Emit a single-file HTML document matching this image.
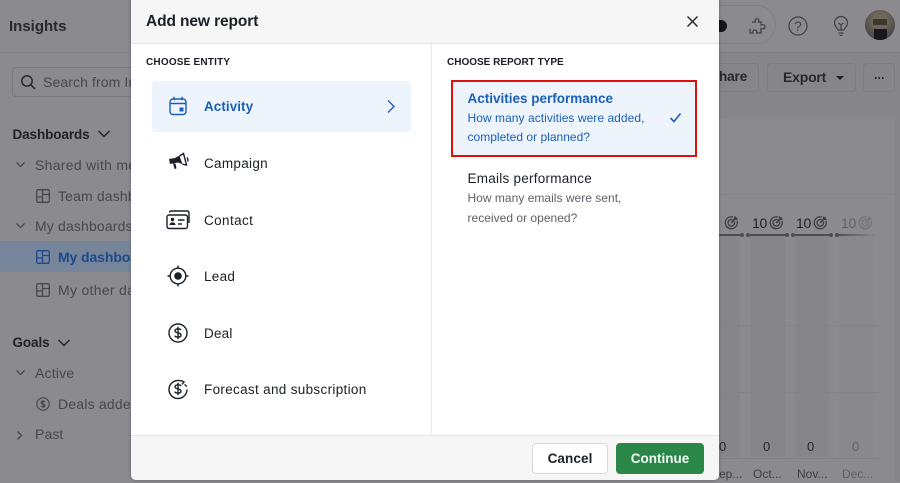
<!DOCTYPE html>
<html><head><meta charset="utf-8"><style>
*{box-sizing:border-box}
html,body{margin:0;padding:0}
body{width:900px;height:481px;overflow:hidden;position:relative;background:#8a8a8f;font-family:"Liberation Sans",sans-serif;color:#1b1f26}
.t{position:absolute;white-space:nowrap;line-height:18px;font-size:14px}
.b{color:#46484e}
.a{position:absolute;display:block;overflow:visible}
.dark{color:#1f2126;font-weight:700}
.cols div{position:absolute;background:#85858a}
.dot{position:absolute;top:233px;width:4px;height:4px;border-radius:50%;background:#4d4e53}
.ln{position:absolute;top:234px;height:2px;background:#4d4e53}
.gl{position:absolute;left:719px;width:160px;height:1px;background:#838388}
</style></head><body>
<!-- background page -->
<div style="position:absolute;left:700px;top:52px;width:200px;height:66px;background:#85858a"></div>
<div style="position:absolute;left:0;top:52px;width:900px;height:1px;background:#7f7f84"></div>
<div style="position:absolute;left:700px;top:194px;width:196px;height:1px;background:#838388"></div>
<div style="position:absolute;left:895px;top:118px;width:5px;height:363px;background:#85858a"></div>
<div class="t" style="left:9px;top:18px;font-size:15px;font-weight:700;color:#26282d">Insights</div>
<div style="position:absolute;left:12px;top:67px;width:140px;height:30px;border:1px solid #77777c;border-radius:4px"></div>
<svg class="a" style="left:19px;top:73px" width="18" height="18" viewBox="0 0 18 18" fill="none" stroke="#222429" stroke-width="1.400"><circle cx="8" cy="8" r="5.200"/><path d="M12 12l4 4"/></svg>
<div class="t b" style="left:43px;top:73px;letter-spacing:.1px">Search from In</div>
<div class="t dark" style="left:12.500px;top:126px;font-size:13.500px;letter-spacing:-.1px">Dashboards</div>
<svg class="a" style="left:97px;top:129px" width="14" height="10" fill="none" stroke="#222429" stroke-width="1.400"><path d="M1.500 2l5.500 5.500L12.500 2"/></svg>
<svg class="a" style="left:15px;top:161px" width="11" height="8" fill="none" stroke="#46484e" stroke-width="1.300"><path d="M1.500 1.500l4 4 4-4"/></svg>
<div class="t b" style="left:35px;top:156px;letter-spacing:.3px">Shared with me</div>
<svg class="a" style="left:36px;top:189px" width="14" height="14" fill="none" stroke="#46484e" stroke-width="1.300"><rect x=".7" y=".7" width="12.600" height="12.600" rx="1.500"/><path d="M6.500 .7v12.600M.7 8h5.800M6.500 5.500h6.800"/></svg>
<div class="t b" style="left:58px;top:187px;letter-spacing:.15px">Team dashb</div>
<svg class="a" style="left:15px;top:222px" width="11" height="8" fill="none" stroke="#46484e" stroke-width="1.300"><path d="M1.500 1.500l4 4 4-4"/></svg>
<div class="t b" style="left:35px;top:217px;letter-spacing:.15px">My dashboards</div>
<div style="position:absolute;left:0;top:241px;width:135px;height:31px;background:#77859b"></div>
<svg class="a" style="left:36px;top:250px" width="14" height="14" fill="none" stroke="#1c4a8c" stroke-width="1.300"><rect x=".7" y=".7" width="12.600" height="12.600" rx="1.500"/><path d="M6.500 .7v12.600M.7 8h5.800M6.500 5.500h6.800"/></svg>
<div class="t" style="left:58px;top:248px;font-weight:700;color:#1c4a8c;letter-spacing:-.1px">My dashboa</div>
<svg class="a" style="left:36px;top:283px" width="14" height="14" fill="none" stroke="#46484e" stroke-width="1.300"><rect x=".7" y=".7" width="12.600" height="12.600" rx="1.500"/><path d="M6.500 .7v12.600M.7 8h5.800M6.500 5.500h6.800"/></svg>
<div class="t b" style="left:58px;top:281px;letter-spacing:.3px">My other da</div>
<div class="t dark" style="left:12.500px;top:334px;font-size:13.500px;letter-spacing:-.1px">Goals</div>
<svg class="a" style="left:57px;top:338px" width="14" height="10" fill="none" stroke="#222429" stroke-width="1.400"><path d="M1.500 2l5.500 5.500L12.500 2"/></svg>
<svg class="a" style="left:15px;top:369px" width="11" height="8" fill="none" stroke="#46484e" stroke-width="1.300"><path d="M1.500 1.500l4 4 4-4"/></svg>
<div class="t b" style="left:35px;top:364px;letter-spacing:.2px">Active</div>
<svg class="a" style="left:36px;top:397px" width="14" height="14" fill="none" stroke="#46484e" stroke-width="1.200"><circle cx="7" cy="7" r="6.200"/><path d="M9 5c-.5-1-3.800-1.300-3.900.6C5 7.500 9 6.500 9 8.500c0 1.800-3.500 1.500-4 .4M7 3v8"/></svg>
<div class="t b" style="left:58px;top:395px;letter-spacing:.2px">Deals added</div>
<svg class="a" style="left:16px;top:430px" width="8" height="11" fill="none" stroke="#46484e" stroke-width="1.300"><path d="M1.500 1.500l4 4-4 4"/></svg>
<div class="t b" style="left:35px;top:425px;letter-spacing:.1px">Past</div>

<!-- right background -->
<div style="position:absolute;left:700px;top:5px;width:76px;height:39px;border:1px solid #7f7f84;border-radius:20px"></div>
<div style="position:absolute;left:719px;top:20px;width:8px;height:12px;border-radius:0 6px 6px 0;background:#141518"></div>
<svg class="a" style="left:749px;top:18px" width="18" height="16" viewBox="0 0 18 16" fill="none" stroke="#3e4046" stroke-width="1.200"><path d="M3 4h3.500c-1-2 .2-3.300 1.500-3.300S10.500 2 9.500 4H12v3c2-1 4-.2 4 1.700S14 11.500 12 10.500V15H7.500c.8-2-.5-3-1.700-3S3.300 13 4 15H1V10.500"/></svg>
<svg class="a" style="left:788px;top:16px" width="20" height="20" fill="none" stroke="#3e4046" stroke-width="1.200"><circle cx="10" cy="10" r="9"/></svg>
<div class="t" style="left:794px;top:17px;font-size:14px;color:#3e4046">?</div>
<svg class="a" style="left:833px;top:16px" width="16" height="20" fill="none" stroke="#3e4046" stroke-width="1.200"><path d="M5 14c0-2-3.500-3-3.500-7a6.500 6.500 0 0 1 13 0c0 4-3.500 5-3.500 7zM5.500 17h5M6.500 19.300h3M5.500 7l2.500 2 2.500-2M8 9v5"/></svg>
<div style="position:absolute;left:865px;top:10px;width:30px;height:30px;border-radius:50%;background:radial-gradient(circle at 50% 35%,#6d665a 0 30%,#54514d 60%,#3b3a3a);overflow:hidden"><div style="position:absolute;left:8px;top:9px;width:14px;height:6px;background:#3d362c"></div><div style="position:absolute;left:9px;top:19px;width:13px;height:12px;background:#17181c"></div></div>
<div style="position:absolute;left:700px;top:63px;width:59px;height:29px;border:1px solid #7c7c81;border-radius:4px"></div>
<div class="t" style="left:719px;top:68px;font-weight:700;font-size:13.500px;color:#26282d;letter-spacing:-.1px">hare</div>
<div style="position:absolute;left:767px;top:63px;width:89px;height:29px;border:1px solid #7c7c81;border-radius:4px"></div>
<div class="t" style="left:783px;top:68px;font-weight:700;color:#26282d;letter-spacing:-.2px">Export</div>
<div style="position:absolute;left:836px;top:76px;border:4px solid transparent;border-top:4px solid #1f2126;border-bottom:0"></div>
<div style="position:absolute;left:863px;top:63px;width:32px;height:29px;border:1px solid #7c7c81;border-radius:4px"></div>
<div style="position:absolute;left:874px;top:76.500px;width:10px;height:2px;background:radial-gradient(circle,#1f2126 1px,transparent 1px) 0 0/3.500px 2px"></div>

<div class="cols">
<div style="left:719px;top:236px;width:21px;height:221px"></div>
<div style="left:750px;top:236px;width:35px;height:221px"></div>
<div style="left:795px;top:236px;width:34px;height:221px"></div>
<div style="left:839px;top:236px;width:34px;height:221px;background:#88888d"></div>
</div>
<div class="gl" style="top:325px"></div>
<div class="gl" style="top:392px"></div>
<div class="gl" style="top:458px;background:#808085"></div>
<div class="ln" style="left:719px;width:23px"></div>
<div class="ln" style="left:748px;width:39px"></div>
<div class="ln" style="left:793px;width:38px"></div>
<div class="ln" style="left:837px;width:40px;background:linear-gradient(90deg,#4d4e53,#8a8a8f)"></div>
<div class="dot" style="left:740px"></div>
<div class="dot" style="left:746px"></div>
<div class="dot" style="left:785px"></div>
<div class="dot" style="left:791px"></div>
<div class="dot" style="left:829px"></div>
<div class="dot" style="left:835px"></div>
<div class="t" style="left:752px;top:214px;color:#1f2126;letter-spacing:-.3px">10</div>
<div class="t" style="left:796px;top:214px;color:#1f2126;letter-spacing:-.3px">10</div>
<div class="t" style="left:841px;top:214px;color:#606166;letter-spacing:-.3px">10</div>
<svg width="0" height="0" style="position:absolute"><defs><g id="tg" fill="none" stroke-width="1.300"><path d="M9 2A6 6 0 1 0 13 6"/><path d="M8.500 4.700a3.300 3.300 0 1 0 1.900 1.900"/><path d="M7.200 7.800L12.500 2.500M10.700 1.500v2.800h2.800" stroke-width="1.700"/></g></defs></svg>
<svg class="a" style="left:724px;top:215px;stroke:#3e4046" width="15" height="15"><use href="#tg"/></svg>
<svg class="a" style="left:769px;top:215px;stroke:#3e4046" width="15" height="15"><use href="#tg"/></svg>
<svg class="a" style="left:813px;top:215px;stroke:#3e4046" width="15" height="15"><use href="#tg"/></svg>
<svg class="a" style="left:858px;top:215px;stroke:#747579" width="15" height="15"><use href="#tg"/></svg>
<div class="t" style="left:719px;top:438px;color:#26282d;font-size:13px">0</div>
<div class="t" style="left:763px;top:438px;color:#26282d;font-size:13px">0</div>
<div class="t" style="left:807px;top:438px;color:#26282d;font-size:13px">0</div>
<div class="t" style="left:852px;top:438px;color:#606166;font-size:13px">0</div>
<div class="t" style="left:719px;top:465px;color:#3e4046;font-size:12px">ep...</div>
<div class="t" style="left:753px;top:465px;color:#3e4046;font-size:12px">Oct...</div>
<div class="t" style="left:797px;top:465px;color:#3e4046;font-size:12px">Nov...</div>
<div class="t" style="left:842px;top:465px;color:#606166;font-size:12px">Dec...</div>

<!-- modal -->
<div style="position:absolute;left:131px;top:-6px;width:588px;height:486px;background:#fff;border-radius:5px;overflow:hidden;box-shadow:0 0 3px rgba(0,0,0,.3)"></div>
<div style="position:absolute;left:131px;top:0;width:588px;height:44px;background:#f6f6f7;border-bottom:1.500px solid #e5e5e7"></div>
<div class="t" style="left:146px;top:12.500px;font-size:15.500px;font-weight:700;color:#1b1f26;letter-spacing:-.1px">Add new report</div>
<svg class="a" style="left:686px;top:15px" width="13" height="13" fill="none" stroke="#2a2c31" stroke-width="1.500"><path d="M1.500 1.500l10 10M11.500 1.500l-10 10"/></svg>
<div class="t" style="left:146px;top:54px;font-size:10px;font-weight:700;color:#1b1f26;letter-spacing:.2px">CHOOSE ENTITY</div>
<div class="t" style="left:447px;top:54px;font-size:10px;font-weight:700;color:#1b1f26;letter-spacing:0">CHOOSE REPORT TYPE</div>
<div style="position:absolute;left:431px;top:44px;width:1px;height:392px;background:#e8e8ea"></div>

<div style="position:absolute;left:152px;top:81px;width:259px;height:51px;background:#edf4fc;border-radius:4px"></div>
<svg class="a" style="left:169px;top:96px" width="19" height="20" fill="none" stroke="#1c5fb8" stroke-width="1.400"><rect x="1" y="3" width="16" height="15.500" rx="3"/><path d="M1 7.500h16M5 .8v3.500M13 .8v3.500"/><rect x="10.500" y="11.500" width="4" height="4" fill="#1c5fb8" stroke="none"/></svg>
<div class="t" style="left:204px;top:98px;font-weight:700;font-size:13.500px;color:#1c5fb8;letter-spacing:.05px">Activity</div>
<svg class="a" style="left:386px;top:99px" width="10" height="15" fill="none" stroke="#1c5fb8" stroke-width="1.400"><path d="M2 1.500l6 6-6 6"/></svg>

<svg class="a" style="left:167px;top:152px" width="23" height="22" fill="none" stroke="#1b1f26" stroke-width="1.400"><path d="M2 7l6-1 8-4.500 3 12-8-3-8 1.500z" fill="#1b1f26" stroke="none"/><path d="M12.500 4l4-2.500 3 11.500-4-.8" fill="#fff"/><path d="M6 11.500l1.500 5.500 2-.5-1-5" fill="#1b1f26" stroke="none"/><path d="M20 5.500c1 1 1 2.500.8 4"/></svg>
<div class="t" style="left:204px;top:155px;font-size:13.500px;letter-spacing:.3px">Campaign</div>

<svg class="a" style="left:166px;top:210px" width="24" height="20" fill="none" stroke="#1b1f26" stroke-width="1.400"><rect x="1" y="5" width="20.500" height="13.500" rx="2"/><path d="M3.500 2.500v0A1.500 1.500 0 0 1 5 1h16.500A1.500 1.500 0 0 1 23 2.500v10.500"/><circle cx="6.500" cy="9.500" r="1.700" fill="#1b1f26" stroke="none"/><path d="M3.500 15c.3-3.500 5.700-3.500 6 0z" fill="#1b1f26" stroke="none"/><path d="M12 10h6.500M12 14h4"/></svg>
<div class="t" style="left:204px;top:212px;font-size:13.500px;letter-spacing:.4px">Contact</div>

<svg class="a" style="left:167px;top:265px" width="22" height="22" fill="none" stroke="#1b1f26" stroke-width="1.400"><circle cx="11" cy="11" r="7.800"/><circle cx="11" cy="11" r="3.800" fill="#1b1f26" stroke="none"/><path d="M11 .5v2.700M11 18.800v2.700M.5 11h2.700M18.800 11h2.700"/></svg>
<div class="t" style="left:204px;top:268px;font-size:13.500px;letter-spacing:.3px">Lead</div>

<svg class="a" style="left:168px;top:323px" width="20" height="20" fill="none" stroke="#1b1f26" stroke-width="1.400"><circle cx="10" cy="10" r="9"/><path d="M13 7c-.7-1.500-5.800-2-6 .8-.2 2.700 6 1.400 6 4.300 0 2.700-5.500 2.300-6.200.6M10 3.800v12.400"/></svg>
<div class="t" style="left:204px;top:325px;font-size:13.500px;letter-spacing:.2px">Deal</div>

<svg class="a" style="left:168px;top:379px" width="21" height="20" fill="none" stroke="#1b1f26" stroke-width="1.400"><path d="M13 2A9 9 0 1 0 19 10.500"/><path d="M13 1.500l3 1.500-2 2.500M16.500 5.500l2.500 2"/><path d="M13 7c-.7-1.500-5.800-2-6 .8-.2 2.700 6 1.400 6 4.300 0 2.700-5.500 2.300-6.200.6M10 3.800v12.400"/></svg>
<div class="t" style="left:204px;top:381px;font-size:13.500px;letter-spacing:.32px">Forecast and subscription</div>

<div style="position:absolute;left:451px;top:80px;width:246px;height:77px;background:#edf4fc;border:2.500px solid #e0100c"></div>
<div class="t" style="left:467.500px;top:90px;font-size:13.500px;font-weight:700;color:#1c5fb8;letter-spacing:0">Activities performance</div>
<div class="t" style="left:467.500px;top:108.500px;font-size:12px;color:#1c5fb8;letter-spacing:.05px">How many activities were added,</div>
<div class="t" style="left:467.500px;top:128px;font-size:12px;color:#1c5fb8;letter-spacing:.02px">completed or planned?</div>
<svg class="a" style="left:669px;top:112px" width="13" height="11" fill="none" stroke="#1c5fb8" stroke-width="1.600"><path d="M1.500 6l3.500 3.500 6.500-8"/></svg>
<div class="t" style="left:467.500px;top:169.500px;font-size:13.500px;color:#1b1f26;letter-spacing:.25px">Emails performance</div>
<div class="t" style="left:467.500px;top:189px;font-size:12px;color:#5f6167;letter-spacing:.02px">How many emails were sent,</div>
<div class="t" style="left:467.500px;top:208.500px;font-size:12px;color:#5f6167;letter-spacing:.02px">received or opened?</div>

<div style="position:absolute;left:131px;top:435px;width:588px;height:45px;background:#f6f6f7;border-top:1.500px solid #e5e5e7;border-radius:0 0 5px 5px"></div>
<div style="position:absolute;left:532px;top:443px;width:76px;height:31px;background:#fff;border:1px solid #d8d8da;border-radius:4px"></div>
<div class="t" style="left:532px;top:450px;width:76px;text-align:center;font-weight:700;font-size:13.500px;letter-spacing:.1px;color:#1b1f26">Cancel</div>
<div style="position:absolute;left:616px;top:443px;width:88px;height:31px;background:#2a8748;border-radius:4px"></div>
<div class="t" style="left:616px;top:450px;width:88px;text-align:center;font-weight:700;font-size:13.500px;letter-spacing:0;color:#f2fbf4">Continue</div>
</body></html>
